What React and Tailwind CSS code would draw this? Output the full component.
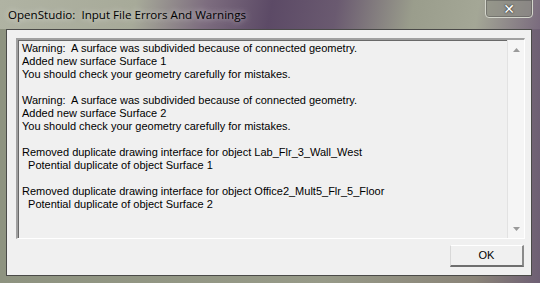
import React from "react";

const lines = [
  "Warning:  A surface was subdivided because of connected geometry.",
  "Added new surface Surface 1",
  "You should check your geometry carefully for mistakes.",
  "",
  "Warning:  A surface was subdivided because of connected geometry.",
  "Added new surface Surface 2",
  "You should check your geometry carefully for mistakes.",
  "",
  "Removed duplicate drawing interface for object Lab_Flr_3_Wall_West",
  "  Potential duplicate of object Surface 1",
  "",
  "Removed duplicate drawing interface for object Office2_Mult5_Flr_5_Floor",
  "  Potential duplicate of object Surface 2",
];

function ArrowUp() {
  return (
    <svg width="7" height="4" viewBox="0 0 7 4">
      <path d="M0 4 L3.5 0 L7 4 Z" fill="#9a9a9a" />
    </svg>
  );
}

function ArrowDown() {
  return (
    <svg width="7" height="4" viewBox="0 0 7 4">
      <path d="M0 0 L3.5 4 L7 0 Z" fill="#9a9a9a" />
    </svg>
  );
}

export default function App() {
  return (
    <div
      className="w-[540px] h-[283px] flex flex-col overflow-hidden bg-[linear-gradient(90deg,#8e9380_0%,#979a88_60%,#8a8478_88%,#6e5f74_100%)]"
      style={{ fontFamily: "'Liberation Sans', Arial, sans-serif" }}
    >
      {/* title bar */}
      <div className="h-[29px] flex items-start justify-between pl-[8px] pr-[7px] shrink-0 bg-[linear-gradient(100deg,#b0b3a3_0%,#a7aa99_25%,#7d6d7f_38%,#5c4a66_50%,#6a5a70_62%,#9a9d8c_76%,#a4a796_88%,#7a6b7e_100%)]">
        <span
          className="mt-[7px] text-[11.6px] leading-[16px] text-black [text-shadow:0_0_6px_rgba(255,255,255,0.8)]"
          style={{ fontFamily: "'Open Sans', 'Liberation Sans', sans-serif" }}
        >
          OpenStudio:&nbsp; Input File Errors And Warnings
        </span>
        <div className="w-[48px] h-[19px] -mt-[1px] rounded-b-[4px] border border-[#d4d6cc] bg-[#8f9185]/60 flex items-center justify-center shadow-[inset_0_0_0_1px_rgba(60,60,60,0.35)]">
          <span className="text-[14px] font-bold leading-none text-white [text-shadow:0_0_1px_#333,0_0_2px_#333]" style={{ fontFamily: "'DejaVu Sans', sans-serif" }}>
            ✕
          </span>
        </div>
      </div>

      {/* client area */}
      <div className="flex-1 flex pl-[6px] pr-[8px] pb-[7px]">
        <div className="flex-1 flex flex-col border border-[#4a4a48] bg-[#f0f0f0] pl-[9px] pr-[6px] pt-[8px] pb-[7px]">
          <div className="h-[201px] flex border-t-2 border-l-2 border-t-[#a0a0a0] border-l-[#a0a0a0] border-b border-r border-b-white border-r-white shadow-[inset_1px_1px_0_#696969]">
            <div className="flex-1 pl-[4px] pt-[2px] text-[11px] leading-[13px] text-black whitespace-pre">
              {lines.map((l, i) => (
                <div key={i} className="h-[13px]">
                  {l}
                </div>
              ))}
            </div>
            <div className="w-[17px] border-l border-l-[#e2e2e2] bg-[#f5f5f5] flex flex-col items-center justify-between pt-[8px] pb-[7px]">
              <ArrowUp />
              <ArrowDown />
            </div>
          </div>
          <div className="flex justify-end mt-[6px]">
            <button className="w-[74px] h-[22px] mr-[1px] border border-[#a8a8a8] border-b-2 border-r-2 border-b-[#6e6e6e] border-r-[#8a8a8a] border-t-white border-l-[#d8d8d8] bg-[#f0f0f0] text-[11px] text-black">
              OK
            </button>
          </div>
        </div>
      </div>
    </div>
  );
}
